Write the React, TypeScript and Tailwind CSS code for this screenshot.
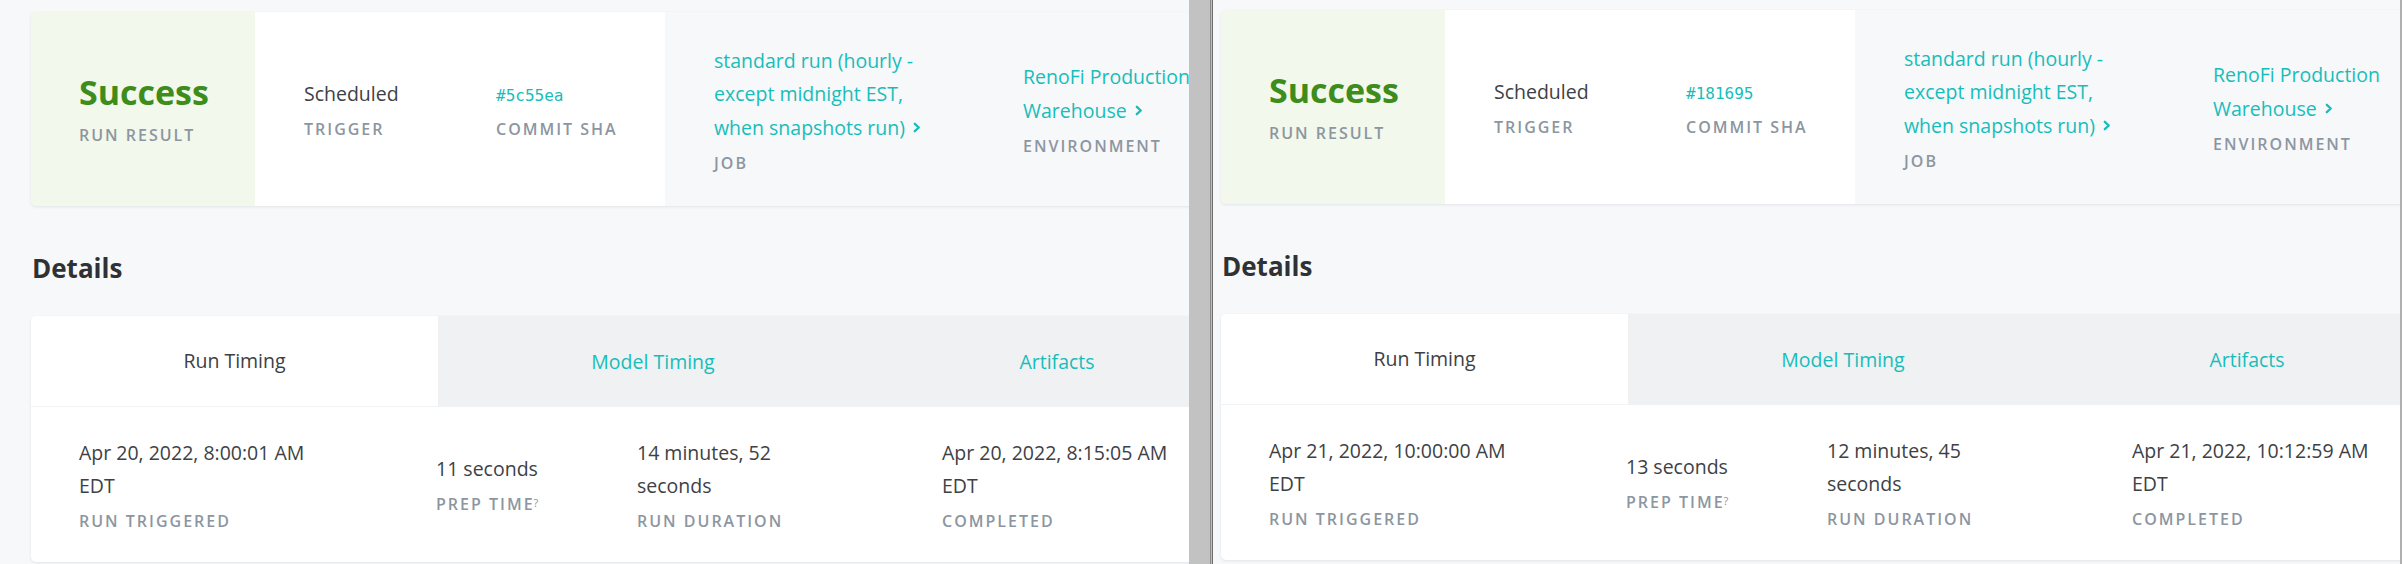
import React from "react";

type RunData = {
  sha: string;
  triggered: [string, string];
  prep: string;
  duration: [string, string];
  completed: [string, string];
};

const TEAL = "text-[#17bdbb]";

function Label({ children, className = "" }: { children: React.ReactNode; className?: string }) {
  return (
    <div
      className={
        "text-[16px] font-semibold uppercase tracking-[2px] leading-[24px] text-[#8c96a1] whitespace-nowrap " +
        className
      }
    >
      {children}
    </div>
  );
}

function Chevron() {
  return (
    <svg
      width="8"
      height="11"
      viewBox="0 0 8 11"
      className="inline-block ml-[8px] align-middle relative -top-[2px]"
    >
      <polyline
        points="1.8,1.8 5.8,5.5 1.8,9.2"
        fill="none"
        stroke="#17bdbb"
        strokeWidth="2.3"
        strokeLinecap="round"
        strokeLinejoin="round"
      />
    </svg>
  );
}

function SummaryCard({ sha }: { sha: string }) {
  return (
    <div className="flex w-[1215px] h-[194px] shrink-0 rounded-[5px] overflow-hidden bg-[#f7f8fa] shadow-[0_1px_3px_rgba(20,30,50,0.09)]">
      <div className="w-[224px] shrink-0 bg-[#f2f8eb] flex items-center pl-[48px]">
        <div>
          <div className="text-[34px] font-bold leading-[43px] text-[#3e8c1a]">Success</div>
          <Label className="mt-[9px]">Run Result</Label>
        </div>
      </div>
      <div className="w-[410px] shrink-0 bg-white flex items-center pl-[49px]">
        <div className="w-[192px] shrink-0">
          <div className="text-[19.5px] leading-[33.5px] text-[#3d4145]">Scheduled</div>
          <Label className="mt-[6.5px]">Trigger</Label>
        </div>
        <div className="shrink-0">
          <div className={"font-['DejaVu_Sans_Mono',monospace] text-[16px] leading-[33.5px] pt-[2px] " + TEAL}>
            {sha}
          </div>
          <Label className="mt-[4.5px]">Commit SHA</Label>
        </div>
      </div>
      <div className="flex-1 flex items-center pl-[49px]">
        <div className="w-[309px] shrink-0">
          <div className={"text-[19.5px] leading-[33.5px] whitespace-nowrap " + TEAL}>
            <div>standard run (hourly -</div>
            <div>except midnight EST,</div>
            <div>
              when snapshots run)
              <Chevron />
            </div>
          </div>
          <Label className="mt-[6.5px]">Job</Label>
        </div>
        <div className="shrink-0">
          <div className={"text-[19.5px] leading-[33.5px] whitespace-nowrap " + TEAL}>
            <div>RenoFi Production</div>
            <div>
              Warehouse
              <Chevron />
            </div>
          </div>
          <Label className="mt-[6.5px]">Environment</Label>
        </div>
      </div>
    </div>
  );
}

function Value({ lines }: { lines: string[] }) {
  return (
    <div className="text-[19.5px] leading-[33.5px] text-[#3d4145] whitespace-nowrap">
      {lines.map((l, i) => (
        <div key={i}>{l}</div>
      ))}
    </div>
  );
}

function DetailsCard({ d }: { d: RunData }) {
  return (
    <div className="w-[1215px] shrink-0 rounded-[5px] overflow-hidden bg-white shadow-[0_1px_3px_rgba(20,30,50,0.09)]">
      <div className="flex h-[91.5px] text-[19.5px]">
        <div className="w-[407px] shrink-0 flex items-center justify-center bg-white border-b border-[#f2f3f5] text-[#3d4145]">
          Run Timing
        </div>
        <div className={"w-[430px] shrink-0 flex items-center justify-center bg-[#f0f1f3] " + TEAL}>
          Model Timing
        </div>
        <div className={"w-[378px] shrink-0 flex items-center justify-center bg-[#f0f1f3] " + TEAL}>
          Artifacts
        </div>
      </div>
      <div className="flex items-center pl-[48px] py-[28.5px]">
        <div className="w-[357px] shrink-0">
          <Value lines={d.triggered} />
          <Label className="mt-[6.5px]">Run Triggered</Label>
        </div>
        <div className="w-[201px] shrink-0">
          <Value lines={[d.prep]} />
          <Label className="mt-[6.5px]">
            Prep Time
            <sup className="text-[11px] tracking-normal font-normal ml-[-1px] relative -top-[3px]">?</sup>
          </Label>
        </div>
        <div className="w-[305px] shrink-0">
          <Value lines={d.duration} />
          <Label className="mt-[6.5px]">Run Duration</Label>
        </div>
        <div className="shrink-0">
          <Value lines={d.completed} />
          <Label className="mt-[6.5px]">Completed</Label>
        </div>
      </div>
    </div>
  );
}

function Panel({ d, className }: { d: RunData; className: string }) {
  return (
    <div className={"h-[564px] overflow-hidden bg-[#f7f8fa] " + className}>
      <SummaryCard sha={d.sha} />
      <h2 className="mt-[45.5px] mb-[32px] ml-[1px] text-[26px] font-bold leading-[32px] text-[#2e3236]">Details</h2>
      <DetailsCard d={d} />
    </div>
  );
}

const LEFT: RunData = {
  sha: "#5c55ea",
  triggered: ["Apr 20, 2022, 8:00:01 AM", "EDT"],
  prep: "11 seconds",
  duration: ["14 minutes, 52", "seconds"],
  completed: ["Apr 20, 2022, 8:15:05 AM", "EDT"],
};

const RIGHT: RunData = {
  sha: "#181695",
  triggered: ["Apr 21, 2022, 10:00:00 AM", "EDT"],
  prep: "13 seconds",
  duration: ["12 minutes, 45", "seconds"],
  completed: ["Apr 21, 2022, 10:12:59 AM", "EDT"],
};

export default function App() {
  return (
    <div className="flex w-[2402px] h-[564px] overflow-hidden bg-[#f7f8fa] font-['Open_Sans',sans-serif] antialiased">
      <Panel d={LEFT} className="w-[1189px] shrink-0 pl-[31px] pt-[12px]" />
      <div className="w-[21px] shrink-0 bg-[#c2c2c2]" />
      <div className="w-[1px] shrink-0 bg-[#8a8a8a]" />
      <div className="w-[1px] shrink-0 bg-[#bebebe]" />
      <div className="w-[1px] shrink-0 bg-[#6f6f6f]" />
      <Panel d={RIGHT} className="flex-1 min-w-0 pl-[8px] pt-[10px]" />
      <div className="w-[2px] shrink-0 bg-[#b0b0b0]" />
    </div>
  );
}
